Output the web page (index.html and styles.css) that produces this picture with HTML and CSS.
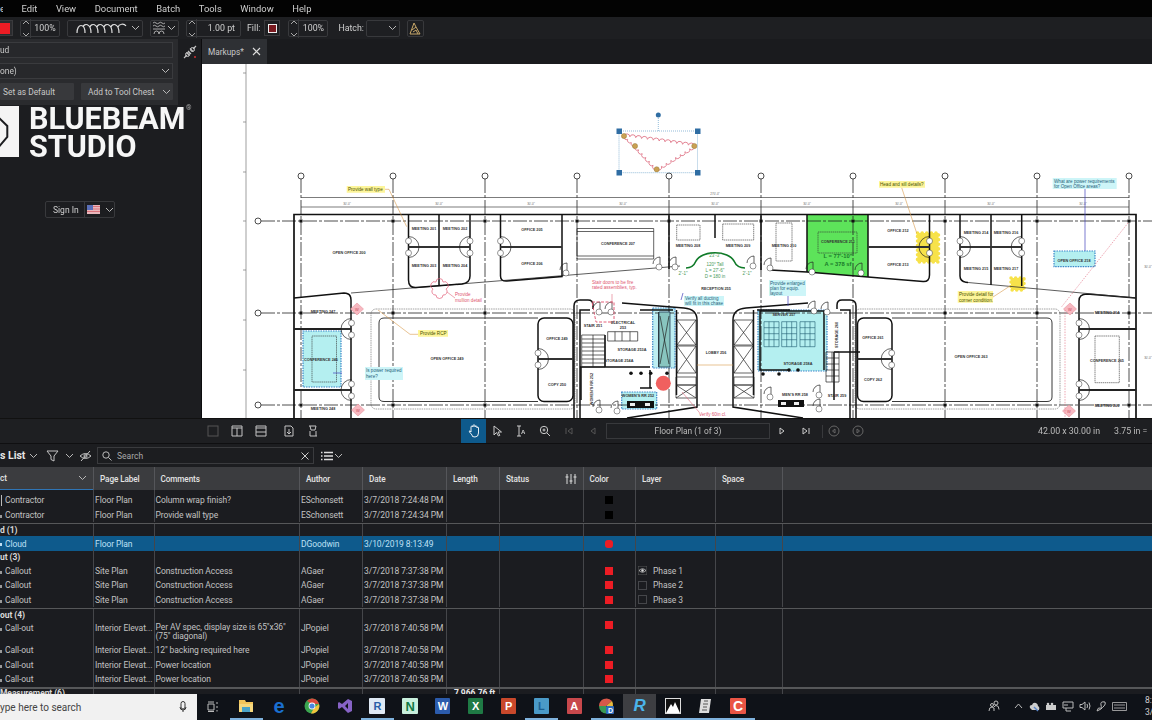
FILE: index.html
```html
<!DOCTYPE html>
<html lang="en">
<head>
<meta charset="utf-8">
<title>Bluebeam Revu</title>
<link rel="stylesheet" href="styles.css">
</head>
<body>
<svg class="defs" width="0" height="0">
<defs>
<path id="chev" d="M0 0l3.500 3.500L7 0" fill="none" stroke="#b8b8b8" stroke-width="1"/>
<g id="spin"><path d="M1 5l3-3 3 3M1 14l3 3 3-3" fill="none" stroke="#a8a8a8" stroke-width="1"/></g>
</defs>
</svg>

<div class="app">
  <nav class="menu">
    <span class="m-first">e</span><span>Edit</span><span>View</span><span>Document</span><span>Batch</span><span>Tools</span><span>Window</span><span>Help</span>
  </nav>

  <div class="toolbar">
    <span class="swatch-cut"><i></i></span>
    <span class="fld w40"><svg class="spin" width="8" height="19"><use href="#spin"/></svg><b>100%</b></span>
    <span class="fld w76">
      <svg width="54" height="14" viewBox="0 0 54 14"><path d="M2 12C2 2 10 2 10 12M8 6C9 2 16 2 16 12M15 6C16 2 23 2 23 12M22 6C23 2 30 2 30 12M29 6C30 2 37 2 37 12M36 6C37 2 44 2 44 12M43 6C44 3 49 2 51 5" fill="none" stroke="#ddd" stroke-width="1.200"/></svg>
      <svg class="ch" width="7" height="4"><use href="#chev"/></svg>
    </span>
    <span class="fld w29">
      <svg width="14" height="14" viewBox="0 0 14 14"><path d="M1 2q1.500-1.500 3 0t3 0 3 0 3 0M1 5q1.500-1.500 3 0t3 0 3 0 3 0M1 8h12M2 13q0-3 2.500-3T7 13M7 13q0-3 2.500-3t2.500 3" fill="none" stroke="#ccc" stroke-width=".8"/></svg>
      <svg class="ch" width="7" height="4"><use href="#chev"/></svg>
    </span>
    <span class="fld w55"><svg class="spin" width="8" height="19"><use href="#spin"/></svg><b class="r">1.00 pt</b></span>
    <span class="lab">Fill:</span>
    <span class="fillbox"><i></i></span>
    <span class="fld w40 mid"><svg class="spin" width="8" height="19"><use href="#spin"/></svg><b>100%</b></span>
    <span class="lab hatch">Hatch:</span>
    <span class="fld w34"><svg class="ch" width="7" height="4"><use href="#chev"/></svg></span>
    <span class="fld w17"><svg width="14" height="14" viewBox="0 0 14 14"><path d="M2 13L6 2l2 4M2 13h10L8 6 4 9M5 11l3-2 2 4" fill="none" stroke="#c9a96a" stroke-width="1"/></svg></span>
  </div>

  <div class="work">
    <aside class="side">
      <div class="side-top">
        <div class="props">
          <div class="pf">ud</div>
          <div class="pf pf2">one)<svg width="7" height="4"><use href="#chev"/></svg></div>
          <div class="pbtns">
            <span class="pb pb1">Set as Default</span>
            <span class="pb pb2">Add to Tool Chest<svg width="7" height="4"><use href="#chev"/></svg></span>
          </div>
        </div>
        <div class="plug"><svg width="14" height="14" viewBox="0 0 14 14"><path d="M1 13l3-3M10 4l3-3M5 6l3 3M3.500 7.500l3 3M7 3.500l3 3" fill="none" stroke="#c4c4c4" stroke-width="1.200"/><circle cx="4.500" cy="9.500" r="2" fill="none" stroke="#c4c4c4"/><circle cx="9.500" cy="4.500" r="2" fill="none" stroke="#c4c4c4"/><circle cx="12" cy="12" r="1" fill="#c33"/></svg></div>
      </div>
      <div class="logo">
        <span class="logo-box"><svg width="19" height="51" viewBox="0 0 19 51"><path d="M-3 10L7.300 20V31L-3 43" fill="none" stroke="#1c1d20" stroke-width="2"/></svg></span>
        <span class="logo-txt">BLUEBEAM<br>STUDIO</span>
        <span class="reg">®</span>
      </div>
      <div class="signin">
        <span class="si-t">Sign In</span>
        <span class="si-f"><svg width="13" height="9" viewBox="0 0 13 9"><rect width="13" height="9" fill="#e8b6bb"/><path d="M0 1.500h13M0 4h13M0 6.500h13" stroke="#d4606a" stroke-width=".8"/><rect width="6" height="5" fill="#5a6fb8"/></svg><svg width="7" height="4"><use href="#chev"/></svg></span>
      </div>
    </aside>
    <section class="doc">
      <div class="tabs"><span class="tab">Markups*<svg width="9" height="9" viewBox="0 0 9 9"><path d="M1 1l7 7M8 1L1 8" stroke="#ddd" stroke-width="1.100"/></svg></span></div>
      <div class="canvas">
<svg class="plan" width="950" height="354" viewBox="202 64 950 354">
<defs>
<g id="dr"><path class="thn" d="M0-10.500A10.500 10.500 0 0 1 0 10.500"/><path class="par" d="M0 0H10"/><circle class="bub" cy="-6" r="3"/><circle class="bub" cy="6" r="3"/></g>
<g id="dl"><path class="thn" d="M0-10.500A10.500 10.500 0 0 0 0 10.500"/><path class="par" d="M0 0H-10"/><circle class="bub" cy="-6" r="3"/><circle class="bub" cy="6" r="3"/></g>
<g id="sd"><path class="thn" d="M-7 0A7 7 0 0 1 0-7V3"/><circle class="bub" cx="-1" cy="3" r="3"/></g>
<g id="dm"><path class="dia" d="M0-6L6.500 0 0 6-6.500 0z"/><text class="red tm" y="1.500">W</text></g>
<g id="col"><path class="blk" d="M-1.500-1.500h3v3h-3z"/></g>
<g id="rack"><path class="rk" d="M0 0h15v25H0zM5 0v25M10 0v25M0 6h15M0 12h15M0 18h15"/></g>
<g id="shell">
<path class="w" d="M574 418V306Q574 300 580 300H588Q593 300 593 305V309"/>
<path class="w" d="M622 303L684 308Q697 309 697 320V407L627 418"/>
<path class="w" d="M580 418V310H590M640 310H673M676.500 310V395"/>
<path class="thn" d="M677 320h19v25h-19zM677 320l19 25M696 320l-19 25M677 346h19v27h-19zM677 346l19 27M696 346l-19 27"/>
<path class="thn" d="M676 377h20v8h-20zM676 385h20v13h-20zM676 385l20 13M696 385l-20 13"/>
</g>
</defs>
<!-- sheet frame -->
<path class="frm" d="M246 64V418M243 73h3M243 122h3M243 172h3M243 221h3M243 270h3M243 320h3M243 370h3"/>
<text class="tiny tm" x="1148" y="268">30'-0"</text><text class="tiny tm" x="1148" y="359">30'-0"</text>
<!-- green room -->
<path class="green" d="M807 214.500H868V277L807 272z"/>
<!-- cyan rooms -->
<path class="cyf" d="M652.700 308H675V368H652.700z"/>
<path class="cyc" d="M303 331h38v56h-38z"/>
<path class="cyc" d="M758 310h69v61h-69z"/>
<path class="cyc" d="M621.700 392h35v17h-35z"/>
<path class="cyc" d="M1054 251h41v15.700h-41z"/>
<path class="cl-yl" d="M917.500 233h21v29h-21z"/>
<path class="cl-yl" d="M1011 278h13v12h-13z"/>
<!-- grid -->
<path class="gl" d="M301 179V418M393 179V418M485 179V418M577 179V418M669 179V418M761 179V418M853 179V418M945 179V418M1037 179V418M1129 179V418"/>
<path class="gl" d="M261 221H1152M261 313H1152M261 405H1152"/>
<path class="dim" d="M301 197.500H1129M301 207H1129"/>
<g class="bubs">
<circle cx="301" cy="176" r="3"/><circle cx="393" cy="176" r="3"/><circle cx="485" cy="176" r="3"/><circle cx="577" cy="176" r="3"/><circle cx="669" cy="176" r="3"/><circle cx="761" cy="176" r="3"/><circle cx="853" cy="176" r="3"/><circle cx="945" cy="176" r="3"/><circle cx="1037" cy="176" r="3"/><circle cx="1129" cy="176" r="3"/>
<circle cx="258" cy="221" r="3"/><circle cx="258" cy="313" r="3"/><circle cx="258" cy="405" r="3"/>
</g>
<use href="#col" x="301" y="221"/><use href="#col" x="393" y="221"/><use href="#col" x="485" y="221"/><use href="#col" x="577" y="221"/><use href="#col" x="669" y="221"/><use href="#col" x="761" y="221"/><use href="#col" x="853" y="221"/><use href="#col" x="945" y="221"/><use href="#col" x="1037" y="221"/><use href="#col" x="1129" y="221"/>
<use href="#col" x="301" y="313"/><use href="#col" x="393" y="313"/><use href="#col" x="485" y="313"/><use href="#col" x="945" y="313"/><use href="#col" x="1037" y="313"/><use href="#col" x="1129" y="313"/>
<use href="#col" x="301" y="405"/><use href="#col" x="393" y="405"/><use href="#col" x="485" y="405"/><use href="#col" x="945" y="405"/><use href="#col" x="1037" y="405"/><use href="#col" x="1129" y="405"/>
<text class="tiny tm" x="347" y="204.500">30'-0"</text><text class="tiny tm" x="439" y="204.500">30'-0"</text><text class="tiny tm" x="531" y="204.500">30'-0"</text><text class="tiny tm" x="623" y="204.500">30'-0"</text><text class="tiny tm" x="715" y="204.500">30'-0"</text><text class="tiny tm" x="807" y="204.500">30'-0"</text><text class="tiny tm" x="899" y="204.500">30'-0"</text><text class="tiny tm" x="991" y="204.500">30'-0"</text><text class="tiny tm" x="1083" y="204.500">30'-0"</text><text class="tiny tm" x="715" y="195">270'-0"</text>
<!-- walls -->
<path class="wo" d="M294 418V214.500H1136V418"/>
<path class="w" d="M294 298L344 293Q351 293 351 300V418M1136 298L1087 294Q1079 294 1079 301V418"/>
<path class="thk" d="M294 329H351M294 390H351M1079 329H1136M1079 390H1136"/>
<path class="sl" d="M351 293L680 266M968 282.500L1136 298"/>
<path class="w" d="M408.500 214.500V280Q408.500 288 416 287.500L462 284Q470 283 470 276V214.500M439 214.500V285"/>
<path class="w" d="M500.500 214.500V276Q500.500 281.500 507 281L562 276.500V214.500"/>
<path class="w" d="M669 214.500V269M715 214.500V238M761 214.500V270M807 214.500V272M868 214.500V277"/>
<path class="w" d="M770 270L807 272L868 277L923 281.500Q929.500 282 929.500 275V214.500"/>
<path class="w" d="M960 214.500V276Q960 282 968 282.500M991 214.500V285M1021.700 214.500V286"/>
<path class="par" d="M408.500 247H470M500.500 247H562M868 247H929.500M960 247H1021.700"/>
<!-- conference / furniture -->
<path class="thn" d="M577 228.500h76.700v30.500H577zM577 231.500h76.700M577 256h76.700"/>
<path class="dsh" d="M676.700 225H700V240H676.700zM722.700 224h31v16h-31zM776 223h16v38h-16zM818 232h39v21h-39zM312 336h24.500v46H312zM1095 336h24.300v46.700H1095z"/>
<!-- open offices -->
<rect class="dsh2" x="371" y="309" width="204" height="100" rx="5"/>
<rect class="dsh2" x="855" y="309" width="205" height="100" rx="5"/>
<path class="thn1" d="M538 318H384Q379 318 379 323V397Q379 401.500 384 401.500H538M892 318H1047Q1052 318 1052 323V397Q1052 401.500 1047 401.500H892"/>
<rect class="w" x="538" y="318" width="35" height="83.500" rx="6"/>
<rect class="w" x="857.500" y="318" width="34.500" height="83.500" rx="6"/>
<path class="par" d="M538 359H573M857.500 359H892"/>
<!-- cores -->
<use href="#shell"/>
<use href="#shell" transform="matrix(-1 0 0 1 1430 0)"/>
<path class="w" d="M580 367H650M605 335V367M581 367V400M650 370V388M640 388H652M659 312V367"/>
<path class="thn" d="M581.700 335h23.300v32h-23.300zM593 335v32M582 339h23M582 343h23M582 347h23M582 351h23M582 355h23M582 359h23M582 363h23"/>
<path class="thn" d="M607.700 331.700h30v9.300h-30zM615 331.700v9.300M622 331.700v9.300M630 331.700v9.300"/>
<path class="dkf" d="M659 312h11v55h-11z"/>
<path class="thn" d="M660 316l9 48M669 316l-9 48"/>
<circle class="blk" cx="631" cy="373.300" r="1.800"/><circle class="blk" cx="641" cy="373.300" r="1.800"/><circle class="blk" cx="650.700" cy="373.300" r="1.800"/><circle class="blk" cx="667" cy="373.300" r="1.800"/>
<circle class="dot-red" cx="663.300" cy="383.300" r="7.500"/>
<path class="blk" d="M627 401h27v7h-27z"/>
<path class="white" d="M630 403h5v3h-5zM645 403h5v3h-5z"/>
<path class="w" d="M824 370V311H760V370H790M834 352H860M834 352V400"/>
<use href="#rack" x="764" y="321.700"/><use href="#rack" x="781.700" y="321.700"/><use href="#rack" x="800" y="321.700"/>
<path class="thn" d="M826 352h13v30h-13zM826 358h13M826 364h13M826 370h13M826 376h13M832 352v30"/>
<circle class="blk" cx="763" cy="374" r="1.800"/><circle class="blk" cx="779" cy="374" r="1.800"/><circle class="blk" cx="789" cy="370" r="1.800"/><circle class="blk" cx="798" cy="370" r="1.800"/>
<path class="blk" d="M778 400h26v7h-26z"/><path class="white" d="M781 402h5v3h-5zM794 402h5v3h-5z"/>
<!-- arc reception -->
<path class="arc" d="M686 268Q693 268 696 261A20 12 0 0 1 734 261Q737 268 745 268"/>
<!-- doors -->
<use href="#dr" x="408.500" y="247"/><use href="#dl" x="470" y="247"/><use href="#dr" x="500.500" y="247"/>
<use href="#dl" x="351.500" y="329"/><use href="#dl" x="351.500" y="390"/><use href="#dr" x="1079" y="329"/><use href="#dr" x="1079" y="390"/>
<use href="#dr" x="538" y="359"/><use href="#dl" x="891.700" y="359"/>
<use href="#dl" x="929.500" y="247"/><use href="#dr" x="960" y="247"/><use href="#dl" x="1021.700" y="247"/>
<use href="#sd" x="567" y="270"/><use href="#sd" x="660" y="264"/><use href="#sd" x="676" y="264"/><use href="#sd" x="754" y="263"/><use href="#sd" x="771" y="265"/><use href="#sd" x="813" y="269"/><use href="#sd" x="862" y="270"/>
<use href="#sd" x="600" y="309"/><use href="#sd" x="612" y="309"/><use href="#sd" x="618" y="408"/><use href="#sd" x="600" y="407"/><use href="#sd" x="815" y="308"/><use href="#sd" x="828" y="309"/><use href="#sd" x="820" y="392"/><use href="#sd" x="820" y="406"/><use href="#sd" x="771" y="394"/>
<!-- diamonds -->
<use href="#dm" x="357" y="309"/><use href="#dm" x="358" y="410"/><use href="#dm" x="1070" y="309"/><use href="#dm" x="1069" y="411"/>
<!-- red/yellow/cyan markups -->
<path class="rd-d" d="M1061.700 306.700L1128 223M1065 310V418"/>
<path class="rd-s" d="M436 282a3.500 3.500 0 0 1 7 0a3.500 3.500 0 0 1 3 7a3.500 3.500 0 0 1-3 6a3.500 3.500 0 0 1-7 0a3.500 3.500 0 0 1-3-6a3.500 3.500 0 0 1 3-7z"/>
<path class="cl-red" d="M592 302h22v20h-18z"/>
<path class="rd-l" d="M447 292L455 298M612 294v10M699 412L682 392"/>
<path class="or" d="M385 189.300H389L406.700 226.700M418 334.300H410L378 310M901.700 187.700L916.700 233M993 297L1010 286M697 365H733"/>
<path class="blu" d="M1085 189V251M342 373H333M683 293L681 300M788 296V306"/>
<path class="yb" d="M346.700 186H385V192.700H346.700zM418 330H448V336.700H418zM879 181H925V187.700H879zM957.700 291H993V302.700H957.700z"/>
<path class="cb" d="M1052.700 178H1116.700V189H1052.700zM365 367H403V380H365zM684 296H724V306H684zM769 280H806V296H769z"/>
<text class="yt" x="348" y="191">Provide wall type</text>
<text class="yt" x="420" y="335">Provide RCP</text>
<text class="yt" x="880" y="186">Head and sill details?</text>
<text class="yt" x="959" y="296">Provide detail for</text><text class="yt" x="959" y="301.500">corner condition.</text>
<text class="ct" x="1054" y="183">What are power requirements</text><text class="ct" x="1054" y="188">for Open Office areas?</text>
<text class="ct" x="366" y="372">Is power required</text><text class="ct" x="366" y="377.500">here?</text>
<text class="ct" x="685" y="300">Verify all ducting</text><text class="ct" x="685" y="305">will fit in this chase</text>
<text class="ct" x="770" y="284.500">Provide enlarged</text><text class="ct" x="770" y="290">plan for equip.</text><text class="ct" x="770" y="295">layout</text>
<text class="rt" x="455" y="296">Provide</text><text class="rt" x="455" y="301.500">mullion detail</text>
<text class="rt" x="592" y="284">Stair doors to be fire</text><text class="rt" x="592" y="289">rated assemblies, typ.</text>
<text class="rt" x="699" y="416">Verify 60in cl.</text>
<!-- room labels -->
<g class="rl">
<text x="349" y="254">OPEN OFFICE 200</text><text x="424" y="230">MEETING 201</text><text x="455" y="230">MEETING 202</text><text x="424" y="267">MEETING 203</text><text x="455" y="267">MEETING 204</text>
<text x="532" y="231">OFFICE 205</text><text x="532" y="265">OFFICE 206</text><text x="618" y="245">CONFERENCE 207</text><text x="688" y="247">MEETING 208</text><text x="738" y="247">MEETING 209</text><text x="784" y="247">MEETING 210</text>
<text x="838" y="243">CONFERENCE 211</text><text x="898" y="232">OFFICE 212</text><text x="898" y="266">OFFICE 213</text><text x="976" y="234">MEETING 214</text><text x="1006" y="234">MEETING 216</text><text x="976" y="270">MEETING 215</text><text x="1006" y="270">MEETING 217</text>
<text x="1074" y="261.500">OPEN OFFICE 218</text><text x="716" y="290">RECEPTION 255</text>
<text x="323" y="313">MEETING 247</text><text x="323" y="410">MEETING 248</text><text x="321" y="361">CONFERENCE 246</text><text x="447" y="360">OPEN OFFICE 249</text><text x="557" y="340">OFFICE 249</text><text x="557" y="386">COPY 250</text>
<text x="593" y="327">STAIR 251</text><text x="623" y="324">ELECTRICAL</text><text x="623" y="329">253</text><text x="632" y="351">STORAGE 253A</text><text x="619" y="362">STORAGE 254A</text><text x="638" y="397">WOMEN'S RR 252</text><text x="716" y="354">LOBBY 256</text>
<text x="784" y="316">SERVER 257</text><text x="798" y="365">STORAGE 258A</text><text x="795" y="396">MEN'S RR 258</text><text x="837" y="397">STAIR 259</text><text x="873" y="339">OFFICE 261</text><text x="873" y="381">COPY 262</text><text x="971" y="358">OPEN OFFICE 263</text><text x="1107" y="314">MEETING 264</text><text x="1107" y="362">CONFERENCE 265</text><text x="1107" y="407">MEETING 266</text>
<text transform="rotate(-90 593 389)" x="593" y="389">WOMEN'S RR 252</text><text transform="rotate(-90 837 335)" x="837" y="336">STORAGE 260</text>
</g>
<text class="gt" x="838" y="258">L = 77'-10"</text><text class="gt" x="838" y="265.500">A = 378 sf</text>
<text class="gs" x="715" y="257">23'-3"</text><text class="gs" x="715" y="266">120° Tall</text><text class="gs" x="715" y="272">L = 27'-6"</text><text class="gs" x="715" y="278">D = 180 in</text>
<text class="gs" x="683" y="275">2'-1"</text><text class="gs" x="747" y="275">2'-1"</text>
<!-- selected cloud -->
<rect class="sel" x="619" y="131" width="78.500" height="41.700"/>
<path class="sel" d="M658.300 116V131"/>
<circle class="hnd" cx="658.300" cy="115" r="2.500"/>
<path class="cloud" d="M624 136a3 3 0 0 1 5.860.83a3 3 0 0 1 5.860.83a3 3 0 0 1 5.860.83a3 3 0 0 1 5.860.83a3 3 0 0 1 5.860.83a3 3 0 0 1 5.860.83a3 3 0 0 1 5.860.83a3 3 0 0 1 5.860.83a3 3 0 0 1 5.860.83a3 3 0 0 1 5.860.83a3 3 0 0 1 5.860.83a3 3 0 0 1 5.860.83a2.800 2.800 0 0 1-4.700 2.910a2.800 2.800 0 0 1-4.700 2.910a2.800 2.800 0 0 1-4.700 2.910a2.800 2.800 0 0 1-4.700 2.910a2.800 2.800 0 0 1-4.700 2.910a2.800 2.800 0 0 1-4.700 2.910a2.800 2.800 0 0 1-4.700 2.910a2.800 2.800 0 0 1-4.700 2.910a2.700 2.700 0 0 1-3.620-3.880a2.700 2.700 0 0 1-3.620-3.880a2.700 2.700 0 0 1-3.620-3.880a2.700 2.700 0 0 1-3.620-3.880a2.700 2.700 0 0 1-3.620-3.880a2.700 2.700 0 0 1-3.620-3.880a2.600 2.600 0 0 1-3.670-3.330a2.600 2.600 0 0 1-3.670-3.330a2.600 2.600 0 0 1-3.670-3.330z"/>
<g class="hnd"><rect x="616.500" y="128.500" width="5.500" height="5.500"/><rect x="695" y="128.500" width="5.500" height="5.500"/><rect x="616.500" y="170" width="5.500" height="5.500"/><rect x="695" y="170" width="5.500" height="5.500"/></g>
<g class="ctl"><circle cx="624" cy="136" r="2.600"/><circle cx="635" cy="146" r="2.600"/><circle cx="694.300" cy="146" r="2.600"/><circle cx="656.700" cy="169.300" r="2.600"/></g>
</svg>
      </div>
    </section>
  </div>

  <div class="viewbar">
    <div class="vb-l">
      <svg class="dimic" width="12" height="12" viewBox="0 0 12 12"><rect x="1" y="1" width="10" height="10" fill="none" stroke="#555"/></svg>
      <svg width="12" height="12" viewBox="0 0 12 12"><path d="M1 1h10v10H1zM1 3h10M6 3v8" fill="none" stroke="#c4c4c4"/></svg>
      <svg width="12" height="12" viewBox="0 0 12 12"><path d="M1 1h10v10H1zM1 3h10M1 7h10" fill="none" stroke="#c4c4c4"/></svg>
      <svg class="g-wide" width="12" height="12" viewBox="0 0 12 12"><path d="M2 1h6l2 2v8H2zM6 4v5M4 7l2 2 2-2" fill="none" stroke="#c4c4c4"/></svg>
      <svg width="12" height="12" viewBox="0 0 12 12"><path d="M2 1h7M3 1l1 4H8l1-4M3 11h7M3 6v5M9 6v5" fill="none" stroke="#c4c4c4"/></svg>
    </div>
    <div class="vb-c">
      <span class="hand"><svg width="12" height="14" viewBox="0 0 12 14"><path d="M3 8V3q0-1 1-1t1 1V1.800q0-1 1-1t1 1V3q0-1 1-1t1 1v1q0-.800.800-.800t.700.800v5q0 4-3.500 4T4 11L1.500 8q-.600-1 .500-1.200z" fill="none" stroke="#fff" stroke-width=".9"/></svg></span>
      <svg class="tb" width="12" height="12" viewBox="0 0 12 12"><path d="M3 1v9l2.500-2.500L7.500 11l1.300-.700L7 7h3.500z" fill="none" stroke="#ccc"/></svg>
      <svg class="tb" width="12" height="12" viewBox="0 0 12 12"><path d="M2 1h4M2 11h4M4 1v10" fill="none" stroke="#ccc"/><text class="svg-a" x="6" y="9">A</text></svg>
      <svg class="tb" width="12" height="12" viewBox="0 0 12 12"><circle cx="5" cy="5" r="3.700" fill="none" stroke="#ccc"/><path d="M8 8l3 3M3.500 5h3M5 3.500v3" stroke="#ccc"/></svg>
      <svg class="tb dimic" width="12" height="12" viewBox="0 0 12 12"><path d="M3 3v6M9 3L5 6l4 3z" fill="none" stroke="#555"/></svg>
      <svg class="tb dimic" width="12" height="12" viewBox="0 0 12 12"><path d="M8 3L4 6l4 3z" fill="none" stroke="#555"/></svg>
      <span class="pagebox">Floor Plan (1 of 3)</span>
      <svg class="tb" width="12" height="12" viewBox="0 0 12 12"><path d="M4 3l4 3-4 3z" fill="none" stroke="#ccc"/></svg>
      <svg class="tb" width="12" height="12" viewBox="0 0 12 12"><path d="M3 3l4 3-4 3zM9 3v6" fill="none" stroke="#ccc"/></svg>
      <span class="vsep"></span>
      <svg class="tb" width="12" height="12" viewBox="0 0 12 12"><circle cx="6" cy="6" r="5" fill="none" stroke="#666"/><path d="M7 4L4.500 6 7 8z" fill="none" stroke="#666"/></svg>
      <svg class="tb" width="12" height="12" viewBox="0 0 12 12"><circle cx="6" cy="6" r="5" fill="none" stroke="#666"/><path d="M5 4l2.500 2L5 8z" fill="none" stroke="#666"/></svg>
    </div>
    <div class="vb-r"><span>42.00 x 30.00 in</span><span class="scale">3.75 in =</span></div>
  </div>

  <div class="listbar">
    <b class="lt">s List</b>
    <svg class="c1" width="7" height="4"><use href="#chev"/></svg>
    <svg class="f" width="13" height="13" viewBox="0 0 13 13"><path d="M1 2h11L8 7v5L5 10.500V7z" fill="none" stroke="#c4c4c4"/></svg>
    <svg class="c2" width="7" height="4"><use href="#chev"/></svg>
    <svg class="e" width="13" height="13" viewBox="0 0 13 13"><path d="M1 7q5.500-5 11 0-5.500 5-11 0zM2 12L11 2" fill="none" stroke="#c4c4c4"/><circle cx="6.500" cy="7" r="1.500" fill="none" stroke="#c4c4c4"/></svg>
    <div class="search">
      <svg width="10" height="10" viewBox="0 0 10 10"><circle cx="4" cy="4" r="3.200" fill="none" stroke="#bbb"/><path d="M6.500 6.500L9.500 9.500" stroke="#bbb"/></svg>
      <span>Search</span>
      <svg class="x" width="8" height="8" viewBox="0 0 8 8"><path d="M.5.5l7 7M7.500.5l-7 7" stroke="#ccc"/></svg>
    </div>
    <svg class="l" width="12" height="10" viewBox="0 0 12 10"><path d="M3 1.500h9M3 5h9M3 8.500h9M0 1.500h1.500M0 5h1.500M0 8.500h1.500" stroke="#ddd" stroke-width="1.300"/></svg>
    <svg class="c3" width="7" height="4"><use href="#chev"/></svg>
  </div>

  <div class="table">
    <div class="row head">
      <span class="h0">ct<svg width="7" height="4"><use href="#chev"/></svg></span><span>Page Label</span><span>Comments</span><span>Author</span><span>Date</span><span>Length</span>
      <span class="st">Status<svg width="12" height="12" viewBox="0 0 12 12"><path d="M2 1v10M6 1v10M10 1v10M.5 4h3M4.500 8h3M8.500 4h3" stroke="#ddd"/></svg></span>
      <span>Color</span><span>Layer</span><span>Space</span><span></span>
    </div>
    <div class="row gap"><span></span><span></span><span></span><span></span><span></span><span></span><span></span><span></span><span></span><span></span><span></span></div>
    <div class="row"><span class="s0"><i class="mk dot"></i>Contractor</span><span>Floor Plan</span><span>Column wrap finish?</span><span>ESchonsett</span><span>3/7/2018 7:24:48 PM</span><span></span><span></span><span class="cc"><i class="k"></i></span><span></span><span></span><span></span></div>
    <div class="row"><span class="s0"><i class="mk"></i>Contractor</span><span>Floor Plan</span><span>Provide wall type</span><span>ESchonsett</span><span>3/7/2018 7:24:34 PM</span><span></span><span></span><span class="cc"><i class="k"></i></span><span></span><span></span><span></span></div>
    <div class="sep"></div>
    <div class="row grp"><span>d (1)</span><span></span><span></span><span></span><span></span><span></span><span></span><span></span><span></span><span></span><span></span></div>
    <div class="row sel-row"><span class="s0"><i class="mk wh"></i>Cloud</span><span>Floor Plan</span><span></span><span>DGoodwin</span><span>3/10/2019 8:13:49</span><span></span><span></span><span class="cc"><i class="rr"></i></span><span></span><span></span><span></span></div>
    <div class="row grp grp2"><span>ut (3)</span><span></span><span></span><span></span><span></span><span></span><span></span><span></span><span></span><span></span><span></span></div>
    <div class="row"><span class="s0"><i class="mk"></i>Callout</span><span>Site Plan</span><span>Construction Access</span><span>AGaer</span><span>3/7/2018 7:37:38 PM</span><span></span><span></span><span class="cc"><i class="rr"></i></span><span class="ly"><svg class="eye" width="9" height="9" viewBox="0 0 9 9"><rect width="9" height="9" fill="none" stroke="#555"/><path d="M1 4.500q3.500-3.500 7 0-3.500 3.500-7 0z" fill="none" stroke="#ddd" stroke-width=".7"/><circle cx="4.500" cy="4.500" r="1.200" fill="#ddd"/></svg>Phase 1</span><span></span><span></span></div>
    <div class="row"><span class="s0"><i class="mk"></i>Callout</span><span>Site Plan</span><span>Construction Access</span><span>AGaer</span><span>3/7/2018 7:37:38 PM</span><span></span><span></span><span class="cc"><i class="rr"></i></span><span class="ly"><i class="box"></i>Phase 2</span><span></span><span></span></div>
    <div class="row"><span class="s0"><i class="mk"></i>Callout</span><span>Site Plan</span><span>Construction Access</span><span>AGaer</span><span>3/7/2018 7:37:38 PM</span><span></span><span></span><span class="cc"><i class="rr"></i></span><span class="ly"><i class="box"></i>Phase 3</span><span></span><span></span></div>
    <div class="sep"></div>
    <div class="row grp"><span>out (4)</span><span></span><span></span><span></span><span></span><span></span><span></span><span></span><span></span><span></span><span></span></div>
    <div class="row tall"><span class="s0"><i class="mk"></i>Call-out</span><span>Interior Elevat...</span><span class="cm">Per AV spec, display size is 65"x36"<br>(75" diagonal)</span><span>JPopiel</span><span>3/7/2018 7:40:58 PM</span><span></span><span></span><span class="cc"><i class="rr"></i></span><span></span><span></span><span></span></div>
    <div class="row"><span class="s0"><i class="mk"></i>Call-out</span><span>Interior Elevat...</span><span>12" backing required here</span><span>JPopiel</span><span>3/7/2018 7:40:58 PM</span><span></span><span></span><span class="cc"><i class="rr"></i></span><span></span><span></span><span></span></div>
    <div class="row"><span class="s0"><i class="mk"></i>Call-out</span><span>Interior Elevat...</span><span>Power location</span><span>JPopiel</span><span>3/7/2018 7:40:58 PM</span><span></span><span></span><span class="cc"><i class="rr"></i></span><span></span><span></span><span></span></div>
    <div class="row"><span class="s0"><i class="mk"></i>Call-out</span><span>Interior Elevat...</span><span>Power location</span><span>JPopiel</span><span>3/7/2018 7:40:58 PM</span><span></span><span></span><span class="cc"><i class="rr"></i></span><span></span><span></span><span></span></div>
    <div class="sep"></div>
    <div class="row grp grp3"><span>Measurement (6)</span><span></span><span></span><span></span><span></span><span class="len">7,966.76 ft</span><span></span><span></span><span></span><span></span><span></span></div>
  </div>

  <footer class="taskbar">
    <div class="tsearch"><span>ype here to search</span><svg width="8" height="12" viewBox="0 0 8 12"><rect x="2" y="0.500" width="4" height="7.500" rx="2" fill="none" stroke="#333"/><path d="M1 6q0 3 3 3t3-3M4 9v2" fill="none" stroke="#333"/></svg></div>
    <div class="ti"><svg width="12" height="11" viewBox="0 0 12 11"><path d="M1 1h6M1 3h6v6H1zM1 10.500h6M10 1v2M10 5v2M10 9v1.500" fill="none" stroke="#bbb"/></svg></div>
    <div class="ti on"><svg width="16" height="14" viewBox="0 0 16 14"><path d="M1 1h6l1 2h7v10H1z" fill="#f2c45a"/><rect x="1" y="5" width="14" height="8" fill="#f5d77d"/><rect x="4" y="8" width="8" height="5" fill="#4aa3c8"/></svg></div>
    <div class="ti"><span class="t-e">e</span></div>
    <div class="ti"><svg width="16" height="16" viewBox="0 0 16 16"><circle cx="8" cy="8" r="7.500" fill="#3ba550"/><path d="M8 .5A7.500 7.500 0 0 1 15 6H8L3 3A7.500 7.500 0 0 1 8 .5z" fill="#d94a3d"/><path d="M15 6a7.500 7.500 0 0 1-8 9.500L10 10z" fill="#f3c33c"/><circle cx="8" cy="8" r="3.400" fill="#fff"/><circle cx="8" cy="8" r="2.600" fill="#4a86e0"/></svg></div>
    <div class="ti"><svg width="16" height="16" viewBox="0 0 16 16"><path d="M11 1l4 2v10l-4 2-6-6-3 2-1-1V5l1-1 3 2zM11 5L8 8l3 3z" fill="#8763c6"/></svg></div>
    <div class="ti on"><span class="tile t-r">R</span></div>
    <div class="ti"><span class="tile t-n">N</span></div>
    <div class="ti"><span class="tile t-w">W</span></div>
    <div class="ti"><span class="tile t-x">X</span></div>
    <div class="ti"><span class="tile t-p">P</span></div>
    <div class="ti on"><span class="tile t-l">L</span></div>
    <div class="ti"><span class="tile t-a">A</span></div>
    <div class="ti on"><svg width="17" height="17" viewBox="0 0 17 17"><path d="M1 8a7.500 7.500 0 0 1 13-5L8 8z" fill="#d9584a"/><path d="M1 8a7.500 7.500 0 0 0 7 7.500V8z" fill="#3c9a54"/><path d="M14 3a7.500 7.500 0 0 1 1 5H8z" fill="#e8b93c"/><rect x="8" y="8" width="8" height="8" rx="1" fill="#2f6dbb"/><text class="svg-d" x="10" y="15">D</text></svg></div>
    <div class="ti on act"><span class="t-rv">R</span></div>
    <div class="ti on"><svg width="16" height="16" viewBox="0 0 16 16"><rect x=".5" y=".5" width="15" height="15" fill="#111" stroke="#ddd"/><path d="M1 15L6 6l2 3 2-5 5 11z" fill="#fff"/></svg></div>
    <div class="ti on"><svg width="14" height="16" viewBox="0 0 14 16"><path d="M3 1h10l-2 14H1z" fill="#ddd"/><path d="M6 3h4M5 6h5M5 9h4M4 12h5" stroke="#555"/></svg></div>
    <div class="ti on"><span class="tile t-c">C</span></div>
    <div class="tray">
      <svg width="12" height="12" viewBox="0 0 12 12"><circle cx="8" cy="3" r="2" fill="none" stroke="#bbb"/><circle cx="4" cy="5" r="1.500" fill="none" stroke="#bbb"/><path d="M1 11q0-4 3-4t2 4M6 7q1-1.500 2-1.500 3 0 3 4" fill="none" stroke="#bbb"/></svg>
      <svg class="gapl" width="9" height="6" viewBox="0 0 9 6"><path d="M1 5l3.500-4L8 5" fill="none" stroke="#bbb"/></svg>
      <svg width="12" height="11" viewBox="0 0 12 11"><path d="M2 7q-1-3 2-3 1-3 4-2 2 1 2 3 2 1 1 4H4z" fill="#ccc"/><path d="M6 6l4 4" stroke="#5a85c8" stroke-width="1.500"/></svg>
      <svg width="12" height="9" viewBox="0 0 12 9"><path d="M1 3h10v5H1z" fill="#ccc"/><circle cx="3" cy="2" r="1.300" fill="#ccc"/><circle cx="7" cy="2" r="1.300" fill="#ccc"/></svg>
      <svg width="12" height="11" viewBox="0 0 12 11"><path d="M1 1h10v6H1zM4 7v3h5M6 4h-4" fill="none" stroke="#bbb"/></svg>
      <svg width="12" height="10" viewBox="0 0 12 10"><path d="M1 3.500h2L6 1v8L3 6.500H1zM8 3q1 2 0 4M10 1.500q2 3.500 0 7" fill="none" stroke="#bbb"/></svg>
      <svg width="11" height="11" viewBox="0 0 11 11"><path d="M1 10q1-4 3-3t1-3 4-3q1 2-1 4T5 8z" fill="none" stroke="#bbb"/></svg>
      <svg width="15" height="9" viewBox="0 0 15 9"><path d="M.5.5h14v8H.5zM2 3h11M2 6h11" fill="none" stroke="#bbb" stroke-width=".8"/></svg>
      <div class="clock">8:<br>3/1</div>
    </div>
  </footer>
</div>
</body>
</html>
```
FILE: styles.css
```css
* { box-sizing: border-box; }
html, body { margin: 0; padding: 0; background: #1b1c20; }
body { width: 1152px; height: 720px; overflow: hidden; font-family: Roboto, "Liberation Sans", sans-serif; color: #d4d4d4; }
.defs { position: absolute; }
.app { display: flex; flex-direction: column; width: 1152px; height: 720px; overflow: hidden; filter: blur(.3px); }

/* menu */
.menu { flex: 0 0 17px; background: #030303; display: flex; align-items: center; gap: 18.500px; font-size: 9.400px; color: #cfcfcf; }
.m-first { width: 3px; overflow: hidden; }

/* toolbar */
.toolbar { flex: 0 0 22px; background: #1e1f22; display: flex; align-items: center; font-size: 8.800px; color: #cfcfcf; }
.swatch-cut { width: 13px; height: 16px; background: #2b2c2f; display: flex; align-items: center; margin-right: 7px; border: 1px solid #3a3a3d; border-left: 0; }
.swatch-cut i { width: 10px; height: 11px; background: #ed1c24; }
.fld { height: 17px; border: 1px solid #38393c; border-radius: 2px; display: flex; align-items: center; margin-right: 7px; position: relative; }
.fld b { font-weight: 400; flex: 1; text-align: center; font-size: 8.800px; }
.fld b.r { text-align: right; padding-right: 5px; }
.spin { flex: none; border-right: 1px solid #38393c; width: 10px; padding: 0 1px; }
.ch { margin-left: auto; margin-right: 3px; }
.w40 { width: 40px; }
.w76 { width: 76px; padding-left: 7px; }
.w29 { width: 29px; padding-left: 1px; }
.w55 { width: 55px; margin-right: 6px; }
.w34 { width: 34px; margin-right: 7px; }
.w17 { width: 17px; justify-content: center; }
.mid { margin-left: 8px; margin-right: 10px; }
.lab { margin-right: 4px; }
.hatch { margin-right: 2px; }
.fillbox { width: 16px; height: 16px; border: 1px solid #3a3a3d; display: flex; align-items: center; justify-content: center; }
.fillbox i { width: 9px; height: 9px; background: #7a1a20; border: 1px solid #eee; }

/* work area */
.work { flex: 0 0 379px; display: flex; }
.side { width: 202px; background: #1c1d20; border-right: 1px solid #0c0c0e; display: flex; flex-direction: column; }
.side-top { display: flex; }
.props { width: 178px; height: 66px; background: #2a2b2e; padding: 3px 5px 0 0; display: flex; flex-direction: column; gap: 5px; font-size: 8.400px; color: #c8c8c8; }
.pf { height: 16px; background: #27282b; border: 1px solid #3a3b3e; border-left: 0; display: flex; align-items: center; justify-content: space-between; padding-right: 3px; }
.pbtns { display: flex; justify-content: space-between; height: 17px; margin-top: -1px; }
.pb { background: #38393c; border-radius: 1px; display: flex; align-items: center; padding-left: 3px; }
.pb1 { width: 74px; }
.pb2 { width: 92px; padding: 0 3px 0 7px; justify-content: space-between; }
.plug { flex: 1; display: flex; justify-content: center; padding-top: 6px; }
.logo { display: flex; margin-top: 1px; height: 51px; position: relative; }
.logo-box { width: 19px; height: 51px; background: #f4f4f4; display: block; margin-right: 10px; }
.logo-box svg { display: block; }
.logo-txt { font: 700 30.500px/28px Roboto, "Liberation Sans", sans-serif; color: #f6f6f6; margin-top: -1px; white-space: nowrap; }
.reg { position: absolute; left: 186px; top: -2px; font-size: 7px; color: #aaa; }
.signin { margin: 44px 0 0 45px; width: 70px; height: 17px; border: 1px solid #38393c; border-radius: 2px; display: flex; align-items: center; font-size: 8.500px; color: #cfcfcf; }
.si-t { width: 39px; padding-left: 7px; border-right: 1px solid #38393c; height: 100%; display: flex; align-items: center; }
.si-f { flex: 1; display: flex; align-items: center; gap: 6px; padding-left: 2px; }

.doc { flex: 1; display: flex; flex-direction: column; min-width: 0; }
.tabs { height: 25px; background: #1a1b1e; display: flex; }
.tab { width: 65px; background: #2e3034; display: flex; align-items: center; gap: 8px; padding-left: 6px; font-size: 8.300px; color: #c8c8c8; }
.canvas { height: 354px; background: #fff; overflow: hidden; }
.plan { display: block; }

/* plan drawing */
.plan path, .plan rect, .plan circle { fill: none; }
.plan text { font-family: "Liberation Sans", sans-serif; }
.frm { stroke: #777; stroke-width: .7; }
.tiny { font-size: 3px; fill: #666; }
.tm { text-anchor: middle; }
.red { font-size: 4px; fill: #c94a5a; }
.gl { stroke: #222; stroke-width: .8; stroke-dasharray: 14 2 3 2; }
.dim { stroke: #444; stroke-width: .7; }
.plan .bubs circle { stroke: #222; stroke-width: .8; fill: #fff; }
.plan .blk { fill: #111; }
.plan .white { fill: #eee; }
.plan .green { fill: #5de35a; }
.plan .cyf { fill: #bdeef2; stroke: #3d86c9; stroke-width: 1.200; stroke-dasharray: 1.500 1; }
.plan .cyc { fill: #b4eff0; stroke: #3d86c9; stroke-width: 1.200; stroke-dasharray: 1.500 1; }
.wo { stroke: #111; stroke-width: 1.700; }
.w { stroke: #111; stroke-width: 1.500; }
.thk { stroke: #222; stroke-width: 2.200; }
.sl { stroke: #333; stroke-width: .8; }
.par { stroke: #333; stroke-width: 1.900; }
.thn { stroke: #222; stroke-width: .7; }
.thn1 { stroke: #222; stroke-width: .9; }
.dsh { stroke: #333; stroke-width: .6; stroke-dasharray: 1.500 .6; }
.dsh2 { stroke: #444; stroke-width: .5; stroke-dasharray: 1.500 .8; }
.rk { stroke: #1e5a70; stroke-width: .6; }
.plan .dkf { fill: #88c5bf; stroke: #124; stroke-width: .7; }
.plan .dot-red { fill: #f0605f; }
.plan .bub { fill: #fff; stroke: #333; stroke-width: .5; }
.plan .dia { fill: #f7b8c0; stroke: #e38a94; stroke-width: .5; }
.arc { stroke: #0f7a28; stroke-width: 1.600; }
.rd-d { stroke: #e06a7e; stroke-width: .6; stroke-dasharray: 1.500 1.200; }
.rd-l { stroke: #e06a7e; stroke-width: .6; }
.rd-s { stroke: #e2607a; stroke-width: .7; }
.cl-red { stroke: #e2607a; stroke-width: 1; stroke-dasharray: 3 1.500; }
.plan .cl-yl { fill: #f7e24a; stroke: #f7e24a; stroke-width: 3.500; stroke-linecap: round; stroke-dasharray: .1 4.500; }
.or { stroke: #d89a4c; stroke-width: .6; }
.blu { stroke: #4444bb; stroke-width: .7; }
.plan .yb { fill: #fdf59a; }
.plan .cb { fill: #cdf5f8; }
.yt { font-size: 4.600px; fill: #4a5200; }
.ct { font-size: 4.600px; fill: #1f5f7a; }
.rt { font-size: 4.600px; fill: #e0566f; }
.rl text { font-size: 3.800px; font-weight: 700; fill: #333; text-anchor: middle; }
.gt { font-size: 5.800px; font-weight: 700; fill: #1a7a2a; text-anchor: middle; }
.gs { font-size: 4.500px; fill: #4a9a58; text-anchor: middle; }
.sel { stroke: #4a8fc0; stroke-width: .6; stroke-dasharray: 1 1; }
.plan .hnd, .plan .hnd rect { fill: #2f6da3; }
.cloud { stroke: #e0788a; stroke-width: .9; }
.plan .ctl circle { fill: #c9a152; stroke: #8a6a30; stroke-width: .4; }

/* viewer bar */
.viewbar { flex: 0 0 25px; background: #1e1f22; display: flex; align-items: center; border-top: 1px solid #111; font-size: 8.400px; color: #bcbcbc; }
.viewbar svg { flex: none; }
.vb-l { width: 461px; padding-left: 207px; display: flex; gap: 12px; }
.vb-l .g-wide { margin-left: 4px; }
.vb-c { display: flex; align-items: center; gap: 12px; height: 100%; }
.hand { width: 25px; height: 100%; background: #0e5a8c; display: flex; align-items: center; justify-content: center; margin-right: -7px; }
.pagebox { width: 164px; height: 16px; border: 1px solid #38393c; display: flex; align-items: center; justify-content: center; margin: 0 -6px 0 -5px; }
.vsep { width: 1px; height: 13px; background: #38393c; margin: 0 -7px 0 -2px; }
.vb-r { margin-left: auto; display: flex; gap: 14px; white-space: nowrap; width: 114px; overflow: hidden; font-size: 8.800px; }
.scale { flex: none; }

/* list bar */
.listbar { flex: 0 0 24px; background: #1c1d20; display: flex; align-items: center; border-top: 1px solid #0f0f11; }
.lt { font-size: 10.500px; color: #e6e6e6; width: 30px; }
.c1 { margin-right: 9px; }
.f { margin-right: 7px; }
.c2 { margin-right: 6px; }
.e { margin-right: 5px; }
.search { width: 217px; height: 17px; border: 1px solid #3a3b3e; display: flex; align-items: center; padding-left: 4px; font-size: 8.500px; color: #a8a8a8; margin-right: 7px; }
.search span { margin-left: 5px; }
.x { margin-left: auto; margin-right: 4px; }
.l { margin-right: 2px; }

/* table */
.table { flex: 1; background: #1b1c20; overflow: hidden; display: flex; flex-direction: column; min-height: 0; }
.row { flex: none; display: grid; grid-template-columns: 93px 60.500px 145.500px 63px 84px 53px 83.500px 52.500px 80px 67px 1fr; height: 14.500px; align-items: stretch; font-size: 8.500px; letter-spacing: -.07px; color: #c2c2c2; white-space: nowrap; }
.row > span { border-left: 1px solid #45464a; padding-left: 1px; display: flex; align-items: center; overflow: hidden; }
.row > span:first-child { border-left: 0; padding-left: 0; }
.head { height: 23px; background: #3b3c3f; font-weight: 500; font-size: 8.200px; letter-spacing: -.1px; color: #e4e4e4; }
.head > span { padding-left: 6px; border-left-color: #55565a; }
.head > span:nth-child(n+2) { padding-left: 6px; }
.h0 { border-bottom: 1.500px solid #2f75b5; justify-content: space-between; padding-right: 7px; }
.st { justify-content: space-between; padding-right: 6px; }
.gap { height: 3px; }
.sep { flex: none; height: 1.500px; margin-top: .5px; background: #565759; }
.grp { height: 12px; font-weight: 700; color: #d8d8d8; }
.grp2 { height: 12.500px; }
.grp3 { height: 8px; }
.sel-row { height: 15px; background: #0e5a8c; color: #bfe0f5; }
.tall { height: 22px; }
.tall > span { align-items: flex-start; padding-top: 2px; }
.row > .cm { line-height: 9.500px; padding-top: 1.500px; white-space: normal; display: block; }
.row > span.s0 { padding-left: 5px; position: relative; }
.mk { position: absolute; left: 0; top: 7px; width: 2px; height: 3px; background: #9a9a9a; }
.mk.dot { top: 2px; height: 11px; width: 1px; left: 1px; background: #bbb; }
.mk.wh { background: #bfe0f5; }
.row > .cc { justify-content: center; padding: 0 1px 0 0; }
.cc i { width: 8px; height: 8px; display: block; }
.k { background: #000; }
.rr { background: #ed1c24; }
.sel-row .rr { border-radius: 3px; }
.row > .ly { padding-left: 2px; gap: 6px; }
.eye, .box { flex: none; }
.box { display: block; width: 9px; height: 9px; border: 1px solid #45464a; }
.row > .len { color: #e8e8e8; padding-left: 7px; overflow: hidden; }

/* taskbar */
.taskbar { flex: 0 0 26px; background: #0f1218; display: flex; align-items: stretch; }
.tsearch { width: 197px; background: #f1f1f1; color: #444; font-size: 10px; display: flex; align-items: center; justify-content: space-between; padding-right: 10px; }
.ti { width: 32.800px; display: flex; align-items: center; justify-content: center; border-bottom: 2px solid transparent; }
.ti.on { border-bottom-color: #7fb2dd; }
.ti.act { background: #3d3e42; }
.tile { width: 15px; height: 16px; display: flex; align-items: center; justify-content: center; font: 700 11px "Liberation Sans", sans-serif; border-radius: 1px; }
.t-r { background: #dfe9f5; color: #2a5ea8; width: 16px; }
.t-n { background: #c8efdc; color: #127a45; width: 16px; font-size: 13px; }
.t-w { background: #2b5bac; color: #fff; }
.t-x { background: #1f7a45; color: #fff; }
.t-p { background: #c9482b; color: #fff; }
.t-l { background: #4a9ac8; color: #1d5f90; }
.t-a { background: #c8484c; color: #fff; }
.t-c { background: #ea5545; color: #fff; font-size: 14px; width: 16px; }
.t-e { font: 700 20px/20px "Liberation Sans", sans-serif; color: #1a6fd0; }
.t-rv { font: italic 700 17px/20px "Liberation Sans", sans-serif; color: #4bb4ea; }
.svg-a { font: 700 6px "Liberation Sans", sans-serif; fill: #ccc; }
.svg-d { font: 700 7px "Liberation Sans", sans-serif; fill: #fff; }
.tray { margin-left: auto; display: flex; align-items: center; gap: 5px; padding-bottom: 2px; }
.gapl { margin-left: 8.500px; }
.clock { width: 7px; margin-left: 13.500px; font-size: 8.500px; line-height: 12px; color: #cfcfcf; overflow: hidden; white-space: nowrap; }
```
